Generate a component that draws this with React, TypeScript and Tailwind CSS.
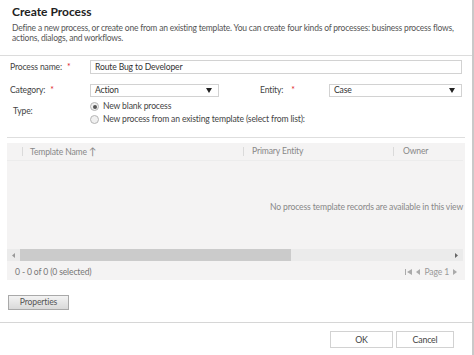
import React from "react";

const font = { fontFamily: 'Lato, "Noto Sans", sans-serif' };

function Star() {
  return <span className="ml-[5px] text-[#e0262b]">*</span>;
}

function Caret() {
  return (
    <svg width="6" height="5" viewBox="0 0 6 5" className="mr-[6px]">
      <path d="M0 0h6L3 5z" fill="#222" />
    </svg>
  );
}

function Radio({ checked }: { checked?: boolean }) {
  return (
    <span className="flex h-[9px] w-[9px] items-center justify-center rounded-full border border-[#b5b5b5] bg-[#f0f0f0]">
      {checked && <span className="h-[4px] w-[4px] rounded-full bg-[#555]" />}
    </span>
  );
}

export default function App() {
  return (
    <div
      className="flex h-[355px] w-[474px] flex-col overflow-hidden border-r-2 border-[#c9c9c9] bg-white tracking-[-0.15px] text-[#444]"
      style={font}
    >
      {/* Header */}
      <div className="h-[56px] shrink-0 border-b border-[#dcdcdc] px-[12px] pt-[6px]">
        <div className="text-[12px] font-bold leading-[12px] tracking-[0px] text-[#222]">Create Process</div>
        <p className="mt-[5px] text-[8.5px] leading-[10px] tracking-[-0.2px] text-[#555]">
          Define a new process, or create one from an existing template. You can create four kinds of processes: business process flows,
          actions, dialogs, and workflows.
        </p>
      </div>

      {/* Form */}
      <div className="pl-[10px] pr-[10px] pt-[4px] text-[8.6px]">
        <div className="flex h-[14px] items-center">
          <div className="w-[80px]">
            Process name:<Star />
          </div>
          <div className="flex h-[14px] flex-1 items-center border border-[#d2d2d2] pl-[4px] text-[#333]">
            Route Bug to Developer
          </div>
        </div>
        <div className="mt-[10px] flex h-[13px] items-center">
          <div className="w-[80px]">
            Category:<Star />
          </div>
          <div className="flex h-[13px] w-[129px] items-center justify-between border border-[#d2d2d2] pl-[4px] text-[#333]">
            Action
            <Caret />
          </div>
          <div className="w-[110px] pl-[41px]">
            Entity:<span className="ml-[8px] text-[#e0262b]">*</span>
          </div>
          <div className="flex h-[13px] flex-1 items-center justify-between border border-[#d2d2d2] pl-[4px] text-[#333]">
            Case
            <Caret />
          </div>
        </div>
        <div className="mt-[4px] flex">
          <div className="w-[80px] pl-[3px] pt-[4px]">Type:</div>
          <div className="flex flex-col gap-[2px]">
            <div className="flex h-[11px] items-center gap-[4px]">
              <Radio checked />
              New blank process
            </div>
            <div className="flex h-[11px] items-center gap-[4px]">
              <Radio />
              New process from an existing template (select from list):
            </div>
          </div>
        </div>
      </div>

      {/* Grid */}
      <div className="mx-[7px] mt-[12px] border-t border-[#dedede] pt-[5px] text-[8.6px]">
        <div className="flex h-[137px] flex-col bg-[#f4f3f3] pr-[2px]">
          <div className="flex h-[18px] items-center border-b border-[#ececec] text-[#888]">
            <span className="ml-[15px] h-[9px] border-l border-[#dadada]" />
            <span className="ml-[7px] w-[213px]">
              Template Name <span className="text-[10px]">↑</span>
            </span>
            <span className="h-[9px] border-l border-[#dadada]" />
            <span className="ml-[8px] w-[141px]">Primary Entity</span>
            <span className="h-[9px] border-l border-[#dadada]" />
            <span className="ml-[9px]">Owner</span>
          </div>
          <div className="flex h-[88px] justify-end pt-[40px] text-[#888]">
            No process template records are available in this view
          </div>
          <div className="flex h-[12px] shrink-0 items-stretch bg-[#ebebeb]">
            <div className="flex w-[13px] items-center justify-center">
              <svg width="3" height="5" viewBox="0 0 3 5">
                <path d="M3 0v5L0 2.5z" fill="#999" />
              </svg>
            </div>
            <div className="w-[271px] bg-[#cbcbcb]" />
            <div className="flex flex-1 items-center justify-end pr-[5px]">
              <svg width="3" height="5" viewBox="0 0 3 5">
                <path d="M0 0v5L3 2.5z" fill="#666" />
              </svg>
            </div>
          </div>
          <div className="flex flex-1 items-center justify-between pl-[8px] pr-[6px] pt-[3px] text-[#777]">
            <span>0 - 0 of 0 (0 selected)</span>
            <span className="flex items-center gap-[4px] text-[#999]">
              <svg width="7" height="6" viewBox="0 0 7 6">
                <path d="M0 0h1v6H0zM7 0v6L2 3z" fill="#aaa" />
              </svg>
              <svg width="4" height="6" viewBox="0 0 4 6">
                <path d="M4 0v6L0 3z" fill="#aaa" />
              </svg>
              <span>Page 1</span>
              <svg width="4" height="6" viewBox="0 0 4 6">
                <path d="M0 0v6L4 3z" fill="#aaa" />
              </svg>
            </span>
          </div>
        </div>
      </div>

      {/* Properties */}
      <div className="px-[8px] pt-[15px]">
        <button className="flex h-[15px] w-[61px] items-center justify-center border border-[#a9a9a9] bg-gradient-to-b from-[#f3f3f3] to-[#d9d9d9] text-[8.6px] text-[#555]">
          Properties
        </button>
      </div>

      {/* Footer */}
      <div className="mt-[12px] flex flex-1 justify-end gap-[3px] border-t border-[#d6d6d6] pr-[18px] pt-[8px] text-[8.8px] text-[#444]">
        <button className="flex h-[17px] w-[63px] items-center justify-center border border-[#d2d2d2] bg-white">OK</button>
        <button className="flex h-[17px] w-[58px] items-center justify-center border border-[#d2d2d2] bg-white">Cancel</button>
      </div>
    </div>
  );
}
